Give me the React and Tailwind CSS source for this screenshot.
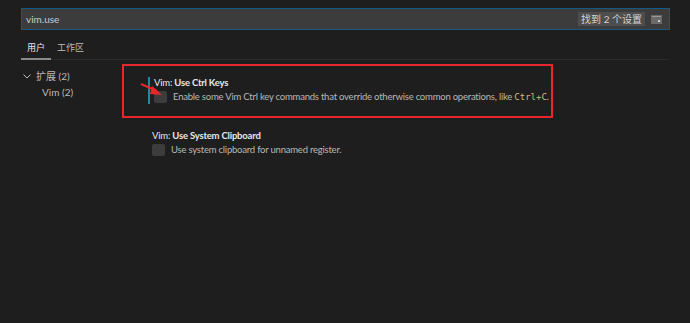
import React from 'react';

const font = { fontFamily: 'Lato, "Noto Sans CJK SC", sans-serif' };

const Checkbox = () => (
  <div className="w-[13px] h-[12px] bg-[#3c3c3c] rounded-[2px] shrink-0" />
);

const Setting = ({ category, title, desc, children }) => (
  <div className="pl-[30px]">
    <div className="text-[9.5px] leading-[13px] tracking-[-0.2px] text-[#e7e7e7]">
      {category}: <span className="font-bold">{title}</span>
    </div>
    <div className="flex items-center gap-[6px] mt-[1px]">
      <Checkbox />
      <div className="text-[9.5px] leading-[13px] tracking-[-0.22px] text-[#b8b8b8] whitespace-nowrap">{desc}{children}</div>
    </div>
  </div>
);

export default function App() {
  return (
    <div className="w-[690px] h-[323px] bg-[#1e1e1e] overflow-hidden" style={font}>
      {/* Search */}
      <div className="pt-[8px] pl-[21px] pr-[20px]">
        <div className="h-[22px] border border-[#155a84] bg-[#3c3c3c] flex items-center pl-[4px] pr-[7px]">
          <span className="flex-1 text-[10px] text-[#cccccc]">vim.use</span>
          <span className="bg-[#4d4d4d] text-[#d4d4d4] text-[10px] leading-[12px] px-[3px] py-[1px]">找到 2 个设置</span>
          <svg width="11" height="9" viewBox="0 0 11 9" className="ml-[6px]">
            <rect x="0" y="0" width="11" height="9" fill="#6a6a6a" />
            <rect x="1" y="1" width="9" height="1" fill="#9a9a9a" />
            <rect x="7" y="5" width="2" height="2" fill="#cfcfcf" />
          </svg>
        </div>
      </div>

      {/* Tabs */}
      <div className="mx-[21px] mt-[9px] border-b border-[#2a2a2a] flex text-[9px] leading-[18px]">
        <div className="px-[6px] pb-[1px] border-b-2 border-[#8a8a8a] text-[#e7e7e7] -mb-[1px]">用户</div>
        <div className="px-[6px] pb-[1px] text-[#bbbbbb]">工作区</div>
      </div>

      {/* Body */}
      <div className="flex">
        <div className="w-[122px] pl-[21px] pt-[8px] text-[10px] leading-[16px] text-[#bbbbbb]">
          <div className="flex items-center">
            <svg width="10" height="10" viewBox="0 0 10 10" className="ml-[1px] mr-[4px]">
              <path d="M1.5 3.5 L5 7 L8.5 3.5" stroke="#bbbbbb" strokeWidth="1" fill="none" />
            </svg>
            <span>扩展 (2)</span>
          </div>
          <div className="pl-[21px]">Vim (2)</div>
        </div>

        <div className="flex-1 pt-[4px]">
          <div className="relative w-[431px] h-[54px] border-2 border-[#e8262b] pt-[10px]">
            <div className="absolute left-[24px] top-[11px] w-[2px] h-[27px] bg-[#1f8ba0]" />
            <Setting category="Vim" title="Use Ctrl Keys" desc="Enable some Vim Ctrl key commands that override otherwise common operations, like ">
              <span className="text-[#d7ba7d] tracking-normal" style={{ fontFamily: '"DejaVu Sans Mono", monospace', fontSize: '9px' }}>Ctrl+C</span>.
            </Setting>
            <svg width="26" height="16" viewBox="0 0 26 16" className="absolute left-[16px] top-[17px]">
              <path d="M1 1 L17 8" stroke="#e8262b" strokeWidth="2" fill="none" />
              <path d="M12 3 L22 12 L10 11 Z" fill="#e8262b" />
            </svg>
          </div>
          <div className="mt-[11px]">
            <Setting category="Vim" title="Use System Clipboard" desc="Use system clipboard for unnamed register." />
          </div>
        </div>
      </div>
    </div>
  );
}
